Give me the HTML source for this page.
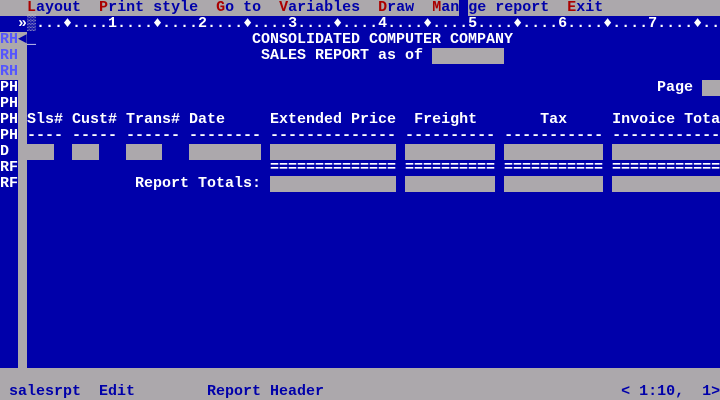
<!DOCTYPE html>
<html><head><meta charset="utf-8"><style>
*{margin:0;padding:0}
body{width:720px;height:400px;overflow:hidden;background:#0000aa;position:relative;font-family:"Liberation Mono","DejaVu Sans Mono",monospace;font-size:15px;font-weight:bold;}
.t{position:absolute;height:16px;line-height:16px;white-space:pre;color:#fff}
.b{position:absolute;background:#aca8ac}
.g{background:#aca8ac}
.r{color:#aa0000}
.n{color:#0000aa}
</style></head><body>
<div class="b" style="left:0;top:0;width:720px;height:16px"></div>
<div class="b" style="left:0;top:368px;width:720px;height:32px"></div>
<div class="b" style="left:18px;top:32px;width:9px;height:336px"></div>
<div class="b" style="left:0;top:32px;width:18px;height:48px"></div>

<div class="t n" style="left:0;top:0">   <span class="r">L</span>ayout  <span class="r">P</span>rint style  <span class="r">G</span>o to  <span class="r">V</span>ariables  <span class="r">D</span>raw  <span class="r">M</span>an<span style="background:#0000aa">a</span>ge report  <span class="r">E</span>xit</div>

<div class="t" style="left:0;top:16px">  »<span style="color:#ccc">▒</span>...♦....1....♦....2....♦....3....♦....4....♦....5....♦....6....♦....7....♦..</div>

<div class="t" style="left:0;top:32px;color:#5555ff">RH<span class="n">◄</span><span style="color:#fff">_</span></div>
<div class="t" style="left:0;top:48px;color:#5555ff">RH</div>
<div class="t" style="left:0;top:64px;color:#5555ff">RH</div>
<div class="t" style="left:252px;top:32px">CONSOLIDATED COMPUTER COMPANY</div>
<div class="t" style="left:261px;top:48px">SALES REPORT as of </div>
<div class="b" style="left:432px;top:48px;width:72px;height:16px"></div>

<div class="t" style="left:0;top:80px">PH</div>
<div class="t" style="left:0;top:96px">PH</div>
<div class="t" style="left:0;top:112px">PH</div>
<div class="t" style="left:0;top:128px">PH</div>
<div class="t" style="left:0;top:144px">D</div>
<div class="t" style="left:0;top:160px">RF</div>
<div class="t" style="left:0;top:176px">RF</div>

<div class="t" style="left:657px;top:80px">Page</div>
<div class="b" style="left:702px;top:80px;width:18px;height:16px"></div>

<div class="t" style="left:27px;top:112px">Sls# Cust# Trans# Date     Extended Price  Freight       Tax     Invoice Tota</div>
<div class="t" style="left:27px;top:128px">---- ----- ------ -------- -------------- ---------- ----------- ------------</div>

<div class="b" style="left:27px;top:144px;width:27px;height:16px"></div>
<div class="b" style="left:72px;top:144px;width:27px;height:16px"></div>
<div class="b" style="left:126px;top:144px;width:36px;height:16px"></div>
<div class="b" style="left:189px;top:144px;width:72px;height:16px"></div>
<div class="b" style="left:270px;top:144px;width:126px;height:16px"></div>
<div class="b" style="left:405px;top:144px;width:90px;height:16px"></div>
<div class="b" style="left:504px;top:144px;width:99px;height:16px"></div>
<div class="b" style="left:612px;top:144px;width:108px;height:16px"></div>

<div class="t" style="left:270px;top:160px">============== ========== =========== ============</div>
<div class="t" style="left:135px;top:176px">Report Totals:</div>
<div class="b" style="left:270px;top:176px;width:126px;height:16px"></div>
<div class="b" style="left:405px;top:176px;width:90px;height:16px"></div>
<div class="b" style="left:504px;top:176px;width:99px;height:16px"></div>
<div class="b" style="left:612px;top:176px;width:108px;height:16px"></div>

<div class="t n" style="left:0;top:384px"> salesrpt  Edit        Report Header                                 &lt; 1:10,  1&gt;</div>
</body></html>
